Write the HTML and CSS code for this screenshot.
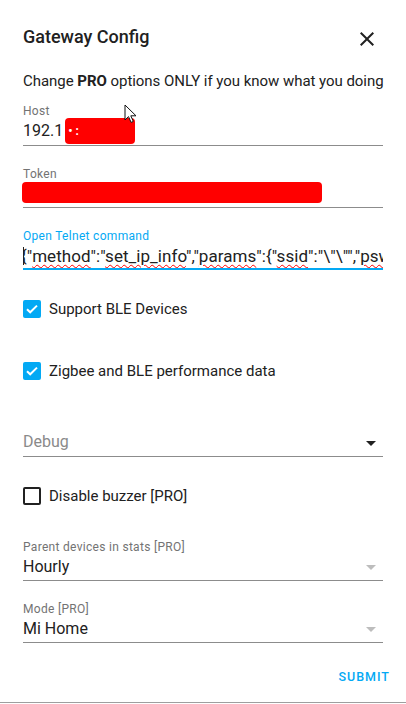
FILE: index.html
```html
<!DOCTYPE html>
<html>
<head>
<meta charset="utf-8">
<link rel="stylesheet" href="styles.css">
</head>
<body>
<div class="dialog">
  <div class="header">
    <h2 class="title">Gateway Config</h2>
    <button class="close" aria-label="Close">
      <svg width="24" height="24" viewBox="0 0 24 24"><path d="M19 6.41L17.59 5 12 10.59 6.41 5 5 6.41 10.59 12 5 17.59 6.41 19 12 13.41 17.59 19 19 17.59 13.41 12z" fill="#212121"/></svg>
    </button>
  </div>
  <p class="desc">Change <b>PRO</b> options ONLY if you know what you doing</p>

  <div class="field host">
    <div class="label">Host</div>
    <div class="value">192.1<span class="redact redact-host">• :</span></div>
  </div>

  <div class="field token">
    <div class="label">Token</div>
    <div class="value"><span class="redact redact-token"></span></div>
  </div>

  <div class="field focused">
    <div class="label">Open Telnet command</div>
    <div class="value scroll"><span class="caret"></span><span class="shift">{"<span class="sp">method</span>":"<span class="sp">set_ip_info</span>","<span class="sp">params</span>":{"<span class="sp">ssid</span>":"\"\"","<span class="sp">pswd</span>":"123123 ; passwd -d admin ; echo enable &gt; /sys/class/tty/tty/enable; telnetd"}}</span></div>
  </div>

  <label class="check first">
    <span class="box checked"><svg width="18" height="18" viewBox="0 0 18 18"><path d="M4 9.2l3.2 3.1L14 5.6" fill="none" stroke="#fff" stroke-width="2"/></svg></span>
    <span class="check-text">Support BLE Devices</span>
  </label>

  <label class="check second">
    <span class="box checked"><svg width="18" height="18" viewBox="0 0 18 18"><path d="M4 9.2l3.2 3.1L14 5.6" fill="none" stroke="#fff" stroke-width="2"/></svg></span>
    <span class="check-text">Zigbee and BLE performance data</span>
  </label>

  <div class="select debug">
    <div class="value placeholder">Debug</div>
    <span class="arrow dark"></span>
  </div>

  <label class="check third">
    <span class="box"></span>
    <span class="check-text">Disable buzzer [PRO]</span>
  </label>

  <div class="select parent">
    <div class="label">Parent devices in stats [PRO]</div>
    <div class="value">Hourly</div>
    <span class="arrow light"></span>
  </div>

  <div class="select mode">
    <div class="label">Mode [PRO]</div>
    <div class="value">Mi Home</div>
    <span class="arrow light"></span>
  </div>

  <div class="actions">
    <button class="submit">SUBMIT</button>
  </div>

  <svg class="cursor" width="14" height="20" viewBox="0 0 14 20"><path d="M1 1v15l3.5-3.4 2.6 5.8 2.2-1-2.5-5.6H12z" fill="#fff" stroke="#111" stroke-width="1"/></svg>
</div>
</body>
</html>
```
FILE: styles.css
```css
* { box-sizing: border-box; }
html, body { margin: 0; padding: 0; background: #fff; }
body {
  font-family: Roboto, "Noto Sans", sans-serif;
  color: #212121;
  width: 406px;
  height: 704px;
  overflow: hidden;
}
.dialog {
  position: relative;
  height: 703px;
  padding: 0 23px;
  border-bottom: 1px solid #9e9e9e;
}
.header {
  display: flex;
  align-items: flex-start;
  justify-content: space-between;
  padding-top: 24px;
  height: 49px;
}
.title {
  margin: 0;
  font-size: 18px;
  font-weight: 500;
  line-height: 25px;
  color: #212121;
}
.close {
  border: 0;
  background: none;
  padding: 0;
  margin-top: 3px;
  margin-right: 4px;
  width: 24px;
  height: 24px;
  display: flex;
}
.desc {
  margin: 23px -10px 0 0;
  font-size: 15px;
  letter-spacing: -0.04px;
  line-height: 18px;
  color: #212121;
  white-space: nowrap;
}
.desc b { font-weight: 700; }

.field {
  border-bottom: 1px solid #8c8c8c;
  padding-bottom: 2px;
  margin-top: 20px;
}
.field.host { margin-top: 13px; }
.field.token { padding-bottom: 1px; }
.label {
  font-size: 12px;
  line-height: 16px;
  letter-spacing: 0.3px;
  color: #737373;
}
.value {
  font-size: 16px;
  line-height: 24px;
  height: 24px;
  color: #212121;
  white-space: nowrap;
}
.redact {
  display: inline-block;
  background: #ff0000;
  border-radius: 4px;
  vertical-align: top;
  color: #fff;
  font-size: 12px;
  font-weight: 700;
}
.redact-host {
  width: 70px;
  height: 26px;
  margin-top: -1px;
  margin-left: 2px;
  padding-left: 3px;
  line-height: 26px;
}
.redact-token {
  width: 300px;
  height: 21px;
  margin-left: -1px;
}
.focused {
  border-bottom: 2px solid #03a9f4;
  padding-bottom: 0;
}
.focused .label { color: #03a9f4; }
.scroll {
  overflow: hidden;
  position: relative;
  font-size: 17px;
  letter-spacing: 0.05px;
}
.shift {
  display: inline-block;
  margin-left: -2px;
}
.caret {
  position: absolute;
  left: 0;
  top: 3px;
  width: 1px;
  height: 18px;
  background: #212121;
  z-index: 1;
}
.sp {
  text-decoration: underline wavy #ff0000;
  text-decoration-thickness: 1px;
  text-underline-offset: 2px;
}

.check {
  display: flex;
  align-items: center;
  gap: 8px;
  font-size: 15px;
  line-height: 18px;
  color: #212121;
}
.check.first { margin-top: 30px; }
.check.second { margin-top: 44px; }
.check.third { margin-top: 30px; }
.box {
  width: 18px;
  height: 18px;
  border: 2px solid #212121;
  border-radius: 2px;
  flex: none;
  display: flex;
}
.box.checked {
  background: #03a9f4;
  border: 0;
}

.select {
  position: relative;
  border-bottom: 1px solid #8c8c8c;
  padding-bottom: 1px;
}
.select.debug { margin-top: 50px; padding-bottom: 2px; }
.select.parent { margin-top: 34px; }
.select.mode { margin-top: 20px; }
.placeholder { color: #8a8a8a; }
.arrow {
  position: absolute;
  right: 7px;
  bottom: 10px;
  width: 0;
  height: 0;
  border-left: 5px solid transparent;
  border-right: 5px solid transparent;
  border-top: 5px solid #212121;
}
.arrow.light { border-top-color: #bdbdbd; }

.actions {
  display: flex;
  justify-content: flex-end;
  margin-top: 26px;
  margin-right: -7px;
}
.submit {
  border: 0;
  background: none;
  padding: 0;
  font-family: Roboto, sans-serif;
  font-size: 12.5px;
  font-weight: 500;
  letter-spacing: 1px;
  color: #03a9f4;
  line-height: 16px;
}
.cursor {
  position: absolute;
  left: 124px;
  top: 104px;
}
```
